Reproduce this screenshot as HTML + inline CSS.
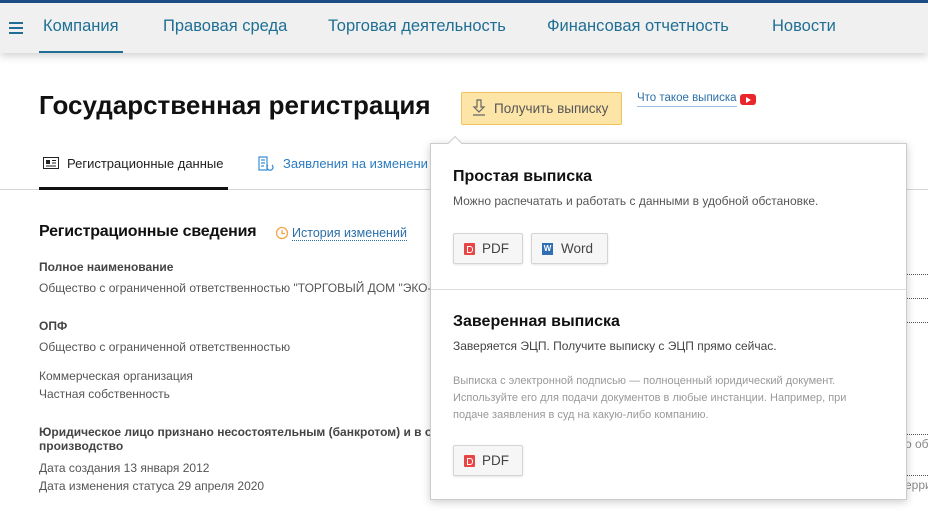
<!DOCTYPE html>
<html><head><meta charset="utf-8"><style>
*{margin:0;padding:0;box-sizing:border-box}
body{width:928px;height:511px;overflow:hidden;background:#fff;font-family:"Liberation Sans",sans-serif;position:relative;color:#222}
.a{position:absolute;white-space:nowrap}
.top{position:absolute;left:0;top:0;width:928px;height:3px;background:#1d4f86}
.nav{position:absolute;left:0;top:3px;width:928px;height:50px;background:#f0f0f0;box-shadow:0 3px 8px rgba(0,0,0,.18)}
.nav span{position:absolute;top:14px;font-size:16.5px;color:#1f6f94}
.dot{position:absolute;left:907px;width:21px;border-top:1px dotted #555}
.btn{position:absolute;height:31px;border:1px solid #d4d4d4;border-radius:2px;background:#f6f6f6;font-size:13.5px;color:#444;box-shadow:0 1px 2px rgba(0,0,0,.1)}
.sm{font-size:12px;color:#555}
.pdf{position:absolute;width:11px;height:12px;background:#e84545;border-radius:1px}
.pdf:after{content:"";position:absolute;left:3px;top:3px;width:4px;height:5px;border:1.3px solid #fff;border-radius:0 3px 3px 0}
</style></head><body>
<div class="top"></div>
<div class="nav">
<div style="position:absolute;left:9px;top:19px;width:14px;height:2px;background:#1f6f94;box-shadow:0 5px 0 #1f6f94,0 10px 0 #1f6f94"></div>
<span style="left:43px">Компания</span>
<span style="left:163px">Правовая среда</span>
<span style="left:328px">Торговая деятельность</span>
<span style="left:547px">Финансовая отчетность</span>
<span style="left:772px">Новости</span>
<div style="position:absolute;left:39px;top:48px;width:84px;height:2px;background:#1f6f94"></div>
</div>
<div class="a" style="left:39px;top:90px;font-size:26px;font-weight:bold;color:#111">Государственная регистрация</div>
<div class="a" style="left:461px;top:92px;width:161px;height:33px;background:#fde5a8;border:1px solid #f0c35a;border-radius:2px;font-size:13.5px;color:#555;padding:8px 0 0 32px">Получить выписку</div>
<svg class="a" style="left:472px;top:99px" width="14" height="18"><path d="M5 1v7H2l5 5 5-5H9V1z M1 16h12" fill="none" stroke="#666" stroke-width="1.2"/></svg>
<div class="a" style="left:637px;top:92px;font-size:11.5px;color:#2b6fa8;border-bottom:1px solid #9cc0de;padding-bottom:2px">Что такое выписка</div>
<div class="a" style="left:740px;top:94px;width:16px;height:11px;background:#e8262b;border-radius:3px"></div>
<div class="a" style="left:746px;top:97px;width:0;height:0;border-left:5px solid #fff;border-top:3px solid transparent;border-bottom:3px solid transparent"></div>
<svg class="a" style="left:43px;top:157px" width="16" height="12"><rect x="0.5" y="0.5" width="15" height="11" fill="none" stroke="#222"/><rect x="3" y="3" width="4" height="4" fill="#222"/><path d="M9 3.5h4M9 6h4M3 9h10" stroke="#222"/></svg>
<div class="a" style="left:67px;top:156px;font-size:13px;color:#222">Регистрационные данные</div>
<svg class="a" style="left:258px;top:156px" width="16" height="16"><path d="M1 1h8v13H1z M3 4h4M3 7h4M3 10h3" fill="none" stroke="#3a8fd6" stroke-width="1.2"/><path d="M10 9a3 3 0 1 0 4 0" fill="none" stroke="#3a8fd6" stroke-width="1.3"/></svg>
<div class="a" style="left:283px;top:156px;font-size:13px;color:#2b7cc2">Заявления на изменени</div>
<div class="a" style="left:0;top:189px;width:928px;height:1px;background:#d6d6d6"></div>
<div class="a" style="left:39px;top:187px;width:189px;height:3px;background:#111"></div>
<div class="a" style="left:39px;top:223px;font-size:16px;font-weight:bold;color:#111;letter-spacing:-0.2px">Регистрационные сведения</div>
<svg class="a" style="left:275px;top:226px" width="14" height="14"><circle cx="7" cy="7" r="5.5" fill="none" stroke="#f5a64a" stroke-width="1.3"/><path d="M7 4v3.5h3" fill="none" stroke="#f5a64a" stroke-width="1.3"/></svg>
<div class="a" style="left:292px;top:226px;font-size:12.5px;color:#2b6fa8;border-bottom:1px dotted #2b6fa8">История изменений</div>
<div class="a sm" style="left:39px;top:260px;font-weight:bold;color:#444">Полное наименование</div>
<div class="a sm" style="left:39px;top:281px">Общество с ограниченной ответственностью "ТОРГОВЫЙ ДОМ "ЭКО-</div>
<div class="a sm" style="left:39px;top:319px;font-weight:bold;color:#444">ОПФ</div>
<div class="a sm" style="left:39px;top:340px">Общество с ограниченной ответственностью</div>
<div class="a sm" style="left:39px;top:369px">Коммерческая организация</div>
<div class="a sm" style="left:39px;top:387px">Частная собственность</div>
<div class="a sm" style="left:39px;top:425px;font-weight:bold;color:#444;line-height:14px">Юридическое лицо признано несостоятельным (банкротом) и в отно<br>производство</div>
<div class="a sm" style="left:39px;top:461px">Дата создания 13 января 2012</div>
<div class="a sm" style="left:39px;top:479px">Дата изменения статуса 29 апреля 2020</div>
<div class="dot" style="top:274px"></div><div class="dot" style="top:298px"></div><div class="dot" style="top:322px"></div>
<div class="dot" style="top:434px"></div><div class="dot" style="top:475px"></div>
<div class="a sm" style="left:905px;top:437px;color:#888">о об</div>
<div class="a sm" style="left:905px;top:478px;color:#888">ерри</div>
<div class="a" style="left:430px;top:143px;width:477px;height:357px;background:#fff;border:1px solid #ccc;box-shadow:0 2px 8px rgba(0,0,0,.2)"></div>
<div class="a" style="left:450px;top:138px;width:10px;height:10px;background:#fff;border-left:1px solid #ccc;border-top:1px solid #ccc;transform:rotate(45deg)"></div>
<div class="a" style="left:453px;top:168px;font-size:16px;font-weight:bold;color:#111">Простая выписка</div>
<div class="a sm" style="left:453px;top:194px">Можно распечатать и работать с данными в удобной обстановке.</div>
<div class="btn" style="left:453px;top:233px;width:70px;padding:7px 0 0 28px">PDF</div>
<div class="pdf" style="left:464px;top:243px"></div>
<div class="btn" style="left:531px;top:233px;width:77px;padding:7px 0 0 29px">Word</div>
<div class="a" style="left:542px;top:243px;width:11px;height:12px;background:#2f6db5;color:#fff;font-size:8px;font-weight:bold;text-align:center;line-height:12px">W</div>
<div class="a" style="left:431px;top:289px;width:475px;height:1px;background:#ddd"></div>
<div class="a" style="left:453px;top:313px;font-size:16px;font-weight:bold;color:#111">Заверенная выписка</div>
<div class="a sm" style="left:453px;top:339px;color:#444">Заверяется ЭЦП. Получите выписку с ЭЦП прямо сейчас.</div>
<div class="a" style="left:453px;top:373px;font-size:11px;color:#999;line-height:17px">Выписка с электронной подписью — полноценный юридический документ.<br>Используйте его для подачи документов в любые инстанции. Например, при<br>подаче заявления в суд на какую-либо компанию.</div>
<div class="btn" style="left:453px;top:445px;width:70px;padding:7px 0 0 28px">PDF</div>
<div class="pdf" style="left:464px;top:455px"></div>
</body></html>
